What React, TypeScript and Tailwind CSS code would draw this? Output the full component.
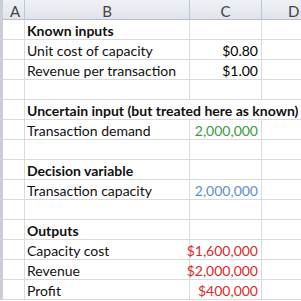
type Row = {
  label?: string;
  bold?: boolean;
  value?: string;
  color?: string;
  span?: boolean;
};

const rows: Row[] = [
  { label: "Known inputs", bold: true },
  { label: "Unit cost of capacity", value: "$0.80", color: "text-black" },
  { label: "Revenue per transaction", value: "$1.00", color: "text-black" },
  {},
  { label: "Uncertain input (but treated here as known)", bold: true, span: true },
  { label: "Transaction demand", value: "2,000,000", color: "text-[#3c9a3c]" },
  {},
  { label: "Decision variable", bold: true },
  { label: "Transaction capacity", value: "2,000,000", color: "text-[#5a8fd0]" },
  {},
  { label: "Outputs", bold: true },
  { label: "Capacity cost", value: "$1,600,000", color: "text-[#dc2a2a]" },
  { label: "Revenue", value: "$2,000,000", color: "text-[#dc2a2a]" },
  { label: "Profit", value: "$400,000", color: "text-[#dc2a2a]" },
];

const cell = "h-5 border-b border-[#d8dadc] flex items-end pb-[1px] leading-none";

export default function App() {
  return (
    <div
      className="w-[301px] h-[301px] overflow-hidden bg-white text-[14px] text-[#111]"
      style={{ fontFamily: "Lato, 'Open Sans', sans-serif" }}
    >
      {/* column headers */}
      <div className="grid grid-cols-[25px_165px_72px_39px] h-5 bg-gradient-to-b from-[#eef1f5] to-[#e1e5eb] border-b border-[#b7bdc6] text-[#444] text-[15px]">
        <div className="border-r border-[#c3c8d0] flex items-center justify-center pl-[3px] border-l-[3px] border-l-[#c9cdd8]">A</div>
        <div className="border-r border-[#c3c8d0] flex items-center justify-center">B</div>
        <div className="border-r border-[#c3c8d0] flex items-center justify-center">C</div>
        <div className="flex items-center pl-[26px]">D</div>
      </div>
      {rows.map((r, i) => (
        <div key={i} className="grid grid-cols-[25px_165px_72px_39px]">
          <div className={`${cell} border-r border-l-[3px] border-l-[#c9cdd8]`} />
          {r.span ? (
            <div className={`${cell} col-span-3 pl-[2px] font-bold whitespace-nowrap`}>{r.label}</div>
          ) : (
            <>
              <div className={`${cell} border-r pl-[2px] whitespace-nowrap ${r.bold ? "font-bold" : ""}`}>
                {r.label}
              </div>
              <div className={`${cell} border-r justify-end pr-[3px] ${r.color ?? ""}`}>{r.value}</div>
              <div className={cell} />
            </>
          )}
        </div>
      ))}
    </div>
  );
}
